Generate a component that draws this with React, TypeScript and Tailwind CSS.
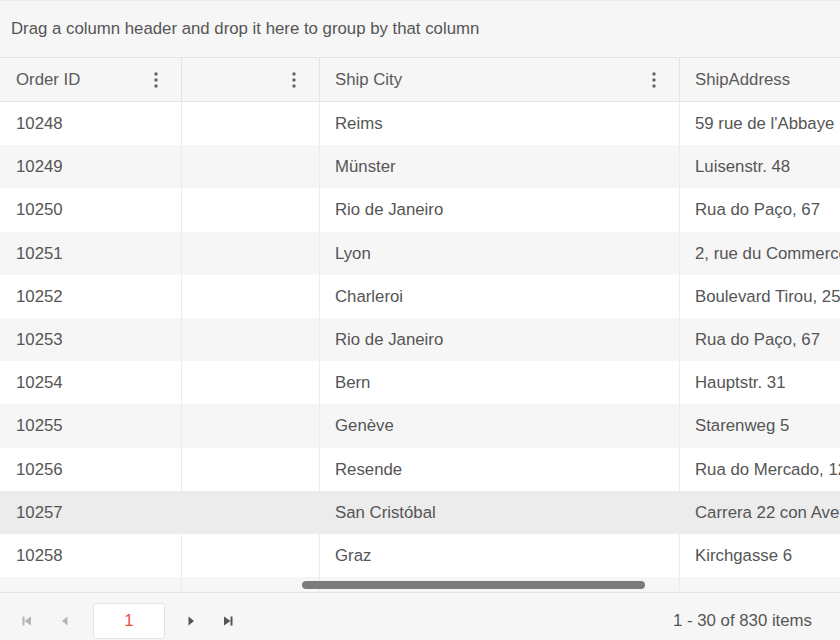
import React from 'react';

const rows = [
  ['10248', 'Reims', "59 rue de l'Abbaye"],
  ['10249', 'Münster', 'Luisenstr. 48'],
  ['10250', 'Rio de Janeiro', 'Rua do Paço, 67'],
  ['10251', 'Lyon', '2, rue du Commerce'],
  ['10252', 'Charleroi', 'Boulevard Tirou, 255'],
  ['10253', 'Rio de Janeiro', 'Rua do Paço, 67'],
  ['10254', 'Bern', 'Hauptstr. 31'],
  ['10255', 'Genève', 'Starenweg 5'],
  ['10256', 'Resende', 'Rua do Mercado, 12'],
  ['10257', 'San Cristóbal', 'Carrera 22 con Ave. Carlos Soublette #8-35'],
  ['10258', 'Graz', 'Kirchgasse 6'],
];

function Dots() {
  return (
    <svg width="4" height="16" viewBox="0 0 4 16" className="fill-[#666]">
      <circle cx="2" cy="2" r="1.7" />
      <circle cx="2" cy="8" r="1.7" />
      <circle cx="2" cy="14" r="1.7" />
    </svg>
  );
}

function PagerIcon({ kind, dim }: { kind: 'first' | 'prev' | 'next' | 'last'; dim?: boolean }) {
  const color = dim ? 'fill-[#b5b5b5]' : 'fill-[#555]';
  return (
    <svg width="12" height="12" viewBox="0 0 12 12" className={color}>
      {kind === 'first' && (
        <>
          <rect x="1.5" y="1.5" width="2" height="9" />
          <polygon points="10,1.5 10,10.5 3.5,6" />
        </>
      )}
      {kind === 'prev' && <polygon points="8.5,1.5 8.5,10.5 3,6" />}
      {kind === 'next' && <polygon points="3.5,1.5 3.5,10.5 9,6" />}
      {kind === 'last' && (
        <>
          <polygon points="2,1.5 2,10.5 8.5,6" />
          <rect x="8.5" y="1.5" width="2" height="9" />
        </>
      )}
    </svg>
  );
}

export default function App() {
  return (
    <div
      className="w-[840px] h-[640px] overflow-hidden bg-white text-[16.8px] text-[#555]"
      style={{ fontFamily: '"Liberation Sans", Arial, sans-serif' }}
    >
      {/* Group drop area */}
      <div className="h-[58px] bg-[#f6f6f6] border-t border-[#ececec] border-b border-b-[#e3e3e3] flex items-center px-[11px]">
        Drag a column header and drop it here to group by that column
      </div>

      {/* Header */}
      <div className="flex h-[44px] bg-[#f6f6f6] border-b border-[#e3e3e3] text-[#5a5a5a]">
        <div className="w-[182px] shrink-0 flex items-center justify-between pl-[16px] pr-[23px] border-r border-[#e3e3e3]">
          <span>Order ID</span>
          <Dots />
        </div>
        <div className="w-[138px] shrink-0 flex items-center justify-end pr-[23px] border-r border-[#e3e3e3]">
          <Dots />
        </div>
        <div className="w-[360px] shrink-0 flex items-center justify-between pl-[15px] pr-[23px] border-r border-[#e3e3e3]">
          <span>Ship City</span>
          <Dots />
        </div>
        <div className="w-[200px] shrink-0 flex items-center pl-[15px]">ShipAddress</div>
      </div>

      {/* Body */}
      {rows.map(([id, city, addr], i) => {
        const bg = i === 9 ? 'bg-[#ececec]' : i % 2 === 1 ? 'bg-[#f6f6f6]' : 'bg-white';
        return (
          <div key={id} className={`flex h-[43.2px] ${bg}`}>
            <div className="w-[182px] shrink-0 flex items-center pl-[16px] border-r border-[#ececec]">{id}</div>
            <div className="w-[138px] shrink-0 border-r border-[#ececec]" />
            <div className="w-[360px] shrink-0 flex items-center pl-[15px] border-r border-[#ececec]">{city}</div>
            <div className="w-[200px] shrink-0 flex items-center pl-[15px] whitespace-nowrap overflow-hidden">{addr}</div>
          </div>
        );
      })}

      {/* Scrollbar strip */}
      <div className="relative flex h-[16px] bg-[#f6f6f6] border-b border-[#e3e3e3]">
        <div className="w-[182px] shrink-0 border-r border-[#ececec]" />
        <div className="w-[138px] shrink-0 border-r border-[#ececec]" />
        <div className="w-[360px] shrink-0 border-r border-[#ececec]" />
        <div className="absolute left-[302px] top-[4px] w-[343px] h-[8px] rounded-full bg-[#7b7b7b]" />
      </div>

      {/* Pager */}
      <div className="h-[50px] bg-[#f6f6f6] flex items-center pt-[5px] pl-[21px] pr-[28px]">
        <PagerIcon kind="first" dim />
        <span className="w-[26px]" />
        <PagerIcon kind="prev" dim />
        <div className="ml-[22px] w-[72px] h-[36px] bg-white border border-[#e3e3e3] rounded-[3px] flex items-center justify-center text-[#e8503f]">
          1
        </div>
        <span className="w-[20px]" />
        <PagerIcon kind="next" />
        <span className="w-[25px]" />
        <PagerIcon kind="last" />
        <div className="ml-auto text-[#555]">1 - 30 of 830 items</div>
      </div>
    </div>
  );
}
